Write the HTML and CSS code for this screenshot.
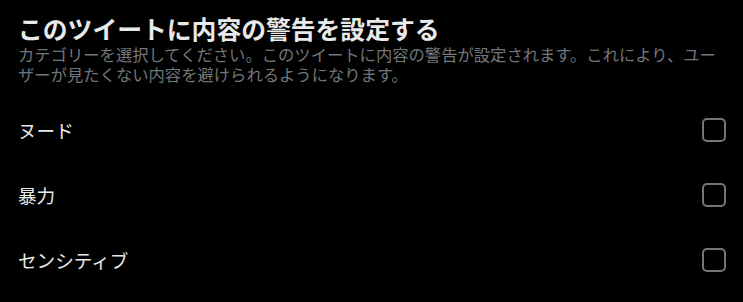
FILE: index.html
```html
<!DOCTYPE html>
<html lang="ja">
<head>
<meta charset="utf-8">
<link rel="stylesheet" href="styles.css">
</head>
<body>
<div class="panel">
  <div class="header">
    <h1 class="title">このツイートに内容の警告を設定する</h1>
    <p class="desc">カテゴリーを選択してください。このツイートに内容の警告が設定されます。これにより、ユーザーが見たくない内容を避けられるようになります。</p>
  </div>
  <ul class="options">
    <li class="option"><span class="label">ヌード</span><span class="box"></span></li>
    <li class="option"><span class="label">暴力</span><span class="box"></span></li>
    <li class="option"><span class="label">センシティブ</span><span class="box"></span></li>
  </ul>
</div>
</body>
</html>
```
FILE: styles.css
```css
html, body {
  margin: 0;
  padding: 0;
  background: #000;
}
body {
  font-family: "Noto Sans CJK JP", "Noto Sans", sans-serif;
  color: #e7e9ea;
}
.panel {
  width: 743px;
  height: 302px;
  box-sizing: border-box;
  padding: 14px 17px 0 18px;
}
.title {
  margin: 0;
  font-size: 24.8px;
  line-height: 28px;
  font-weight: 700;
  color: #e7e9ea;
}
.desc {
  margin: 2px 0 0;
  font-size: 16.32px;
  line-height: 20px;
  color: #71767b;
}
.options {
  list-style: none;
  margin: 13px 0 0;
  padding: 0;
}
.option {
  height: 65px;
  display: flex;
  align-items: center;
  justify-content: space-between;
}
.label {
  font-size: 18.6px;
  line-height: 24px;
  color: #e7e9ea;
}
.box {
  width: 24px;
  height: 24px;
  box-sizing: border-box;
  border: 2px solid #71767b;
  border-radius: 5px;
}
```
